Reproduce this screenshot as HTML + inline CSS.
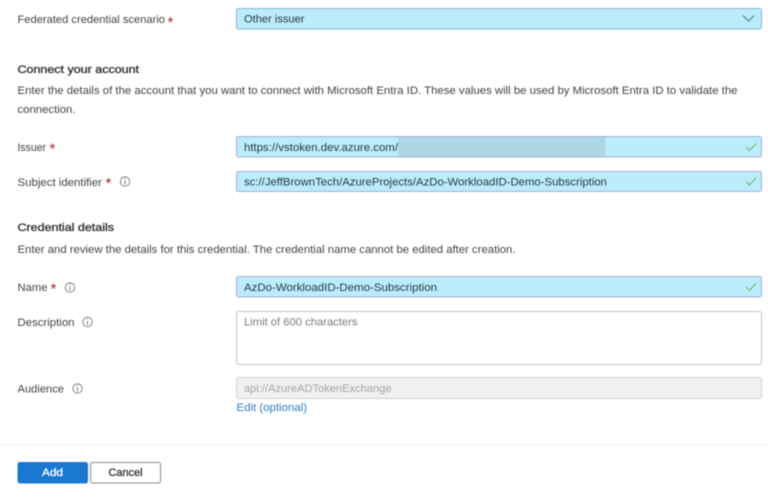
<!DOCTYPE html>
<html lang="en">
<head>
<meta charset="utf-8">
<title>Federated credential</title>
<style>
html,body{margin:0;padding:0;background:#fff;width:768px;height:500px;overflow:hidden}
svg{display:block;filter:blur(0.45px)}
text{font-family:"Liberation Sans",sans-serif;font-size:11.4px;fill:#444342}
.b{fill:#323130;stroke:#323130;stroke-width:.35}
.req{fill:#a4262c;font-size:15px}
.v{fill:#2b3a42}
.ph{fill:#7d7c7b}
.dis{fill:#a6a5a4}
.l{fill:#2b7cc0}
.i circle{fill:none;stroke:#6d6c6b;stroke-width:.8}
.i line{stroke:#6d6c6b;stroke-width:.9}
</style>
</head>
<body>
<svg width="768" height="500" viewBox="0 0 768 500" xmlns="http://www.w3.org/2000/svg">
<rect width="768" height="500" fill="#fff"/>

<text x="17.5" y="23" textLength="147.5" lengthAdjust="spacingAndGlyphs">Federated credential scenario</text>
<text class="req" x="167.5" y="27">*</text>
<rect x="236.5" y="8.5" width="525" height="20.5" rx="2" fill="#bbecfb" stroke="#8fb0d8"/>
<text class="v" x="244" y="22.5" textLength="60.5" lengthAdjust="spacingAndGlyphs">Other issuer</text>
<path d="M743 15.5l5.5 5.5 5.5-5.5" fill="none" stroke="#4f6f80" stroke-width="1"/>

<text class="b" x="17.5" y="73" textLength="121.5" lengthAdjust="spacingAndGlyphs">Connect your account</text>
<text x="17.5" y="94" textLength="720" lengthAdjust="spacingAndGlyphs">Enter the details of the account that you want to connect with Microsoft Entra ID. These values will be used by Microsoft Entra ID to validate the</text>
<text x="17.5" y="113" textLength="58" lengthAdjust="spacingAndGlyphs">connection.</text>

<text x="17.5" y="151" textLength="28.5" lengthAdjust="spacingAndGlyphs">Issuer</text>
<text class="req" x="49.5" y="153.5">*</text>
<rect x="236.5" y="136.5" width="525" height="20.5" rx="2" fill="#bbecfb" stroke="#a9aedb"/>
<rect x="398" y="137" width="207" height="19.5" fill="#aed6e4"/>
<text class="v" x="244" y="151" textLength="154" lengthAdjust="spacingAndGlyphs">https://vstoken.dev.azure.com/</text>
<path d="M746 147l3.5 3.5 6.5-7" fill="none" stroke="#6cb56c" stroke-width="1"/>

<text x="17.5" y="186" textLength="84.5" lengthAdjust="spacingAndGlyphs">Subject identifier</text>
<text class="req" x="105.5" y="188">*</text>
<g class="i"><circle cx="125" cy="181.5" r="4.7"/><line x1="125" y1="180.5" x2="125" y2="184.5"/><line x1="125" y1="178.4" x2="125" y2="179.5"/></g>
<rect x="236.5" y="171.5" width="525" height="20" rx="2" fill="#bbecfb" stroke="#a9aedb"/>
<text class="v" x="244" y="185.5" textLength="363" lengthAdjust="spacingAndGlyphs">sc://JeffBrownTech/AzureProjects/AzDo-WorkloadID-Demo-Subscription</text>
<path d="M746 181.5l3.5 3.5 6.5-7" fill="none" stroke="#6cb56c" stroke-width="1"/>

<text class="b" x="17.5" y="231" textLength="96.5" lengthAdjust="spacingAndGlyphs">Credential details</text>
<text x="17.5" y="253" textLength="498" lengthAdjust="spacingAndGlyphs">Enter and review the details for this credential. The credential name cannot be edited after creation.</text>

<text x="17.5" y="291" textLength="30" lengthAdjust="spacingAndGlyphs">Name</text>
<text class="req" x="50.5" y="293.5">*</text>
<g class="i"><circle cx="70" cy="287.5" r="4.7"/><line x1="70" y1="286.5" x2="70" y2="290.5"/><line x1="70" y1="284.4" x2="70" y2="285.5"/></g>
<rect x="236.5" y="276.5" width="525" height="20.5" rx="2" fill="#bbecfb" stroke="#a9aedb"/>
<text class="v" x="244" y="291" textLength="193" lengthAdjust="spacingAndGlyphs">AzDo-WorkloadID-Demo-Subscription</text>
<path d="M746 287l3.5 3.5 6.5-7" fill="none" stroke="#6cb56c" stroke-width="1"/>

<text x="17.5" y="326" textLength="57" lengthAdjust="spacingAndGlyphs">Description</text>
<g class="i"><circle cx="87.5" cy="322" r="4.7"/><line x1="87.5" y1="321" x2="87.5" y2="325"/><line x1="87.5" y1="318.9" x2="87.5" y2="320"/></g>
<rect x="236.5" y="311.5" width="525" height="53" rx="2" fill="#fff" stroke="#c4c4c4"/>
<text class="ph" x="244" y="325.5" textLength="113.5" lengthAdjust="spacingAndGlyphs">Limit of 600 characters</text>

<text x="17.5" y="392.5" textLength="46.5" lengthAdjust="spacingAndGlyphs">Audience</text>
<g class="i"><circle cx="77.5" cy="388.5" r="4.7"/><line x1="77.5" y1="387.5" x2="77.5" y2="391.5"/><line x1="77.5" y1="385.4" x2="77.5" y2="386.5"/></g>
<rect x="236.5" y="377.5" width="525" height="21" rx="2" fill="#f1f0ef" stroke="#d2d1d0"/>
<text class="dis" x="244" y="392" textLength="147.5" lengthAdjust="spacingAndGlyphs">api://AzureADTokenExchange</text>
<text class="l" x="236.5" y="411" textLength="70.5" lengthAdjust="spacingAndGlyphs">Edit (optional)</text>

<rect x="0" y="444" width="768" height="1" fill="#eeeeee"/>

<rect x="18" y="462.5" width="69.5" height="20.5" rx="2" fill="#1a78d0" stroke="#1a78d0"/>
<text x="42" y="476" style="fill:#fff;stroke:#fff;stroke-width:.3" textLength="21" lengthAdjust="spacingAndGlyphs">Add</text>
<rect x="90.5" y="462.5" width="70" height="20.5" rx="2" fill="#fff" stroke="#8a8886"/>
<text x="108.5" y="476" style="fill:#323130;stroke:#323130;stroke-width:.3" textLength="34" lengthAdjust="spacingAndGlyphs">Cancel</text>
</svg>
</body>
</html>
